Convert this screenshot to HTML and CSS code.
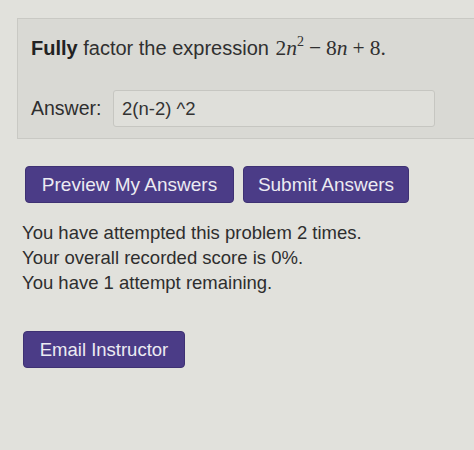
FILE: index.html
```html
<!DOCTYPE html>
<html>
<head>
<meta charset="utf-8">
<link rel="stylesheet" href="styles.css">
</head>
<body>
<div class="page">
  <div class="problem">
    <p class="question"><b>Fully</b> factor the expression <span class="math">2<i>n</i><sup>2</sup><span class="op">−</span>8<i>n</i><span class="op">+</span>8.</span></p>
    <div class="answer-row">
      <span class="label">Answer:</span>
      <div class="input">2(n-2) ^2</div>
    </div>
  </div>
  <div class="actions">
    <button class="btn btn-preview">Preview My Answers</button>
    <button class="btn btn-submit">Submit Answers</button>
  </div>
  <div class="status">
    <p>You have attempted this problem 2 times.</p>
    <p>Your overall recorded score is 0%.</p>
    <p>You have 1 attempt remaining.</p>
  </div>
  <div class="email">
    <button class="btn btn-email">Email Instructor</button>
  </div>
</div>
</body>
</html>
```

FILE: styles.css
```css
html, body {
  margin: 0;
  padding: 0;
}
body {
  background: #e1e1dc;
  font-family: "Liberation Sans", Arial, sans-serif;
  color: #2e2e2e;
  width: 474px;
  height: 450px;
  overflow: hidden;
}
.page {
  padding-top: 18px;
}
.problem {
  margin-left: 17px;
  background: #d9d9d4;
  border: 1px solid #c9c9c4;
  border-right: none;
  padding: 17px 0 8px 13px;
  height: 94px;
}
.question {
  margin: 0;
  font-size: 20px;
  line-height: 24px;
  color: #303030;
}
.question b {
  color: #222;
}
.math {
  font-family: "Liberation Serif", "Times New Roman", serif;
  font-size: 21.5px;
  margin-left: 1px;
}
.math i {
  font-style: italic;
}
.math sup {
  font-size: 14px;
  vertical-align: 9px;
  line-height: 0;
}
.math .op {
  margin: 0 5px;
}
.answer-row {
  display: flex;
  align-items: center;
  margin-top: 30px;
}
.label {
  font-size: 19.5px;
  width: 82px;
}
.input {
  width: 322px;
  box-sizing: border-box;
  height: 37px;
  background: #dfdfda;
  border: 1px solid #c6c6c1;
  border-radius: 3px;
  padding: 0 8px;
  display: flex;
  align-items: center;
  font-size: 18.5px;
  color: #333;
}
.actions {
  display: flex;
  gap: 9px;
  margin: 27px 0 0 25px;
}
.btn {
  font-family: "Liberation Sans", Arial, sans-serif;
  background: #4b3c87;
  color: #ecebf2;
  border: 1px solid #3e3173;
  border-radius: 4px;
  height: 37px;
  font-size: 19px;
  padding: 0;
  white-space: nowrap;
  cursor: pointer;
}
.btn-preview {
  width: 209px;
}
.btn-submit {
  width: 166px;
}
.status {
  margin: 17px 0 0 22px;
  font-size: 18.5px;
  line-height: 25px;
  color: #2e2e2e;
}
.status p {
  margin: 0;
}
.email {
  margin: 36px 0 0 23px;
}
.btn-email {
  width: 162px;
  font-size: 18.5px;
}
```
